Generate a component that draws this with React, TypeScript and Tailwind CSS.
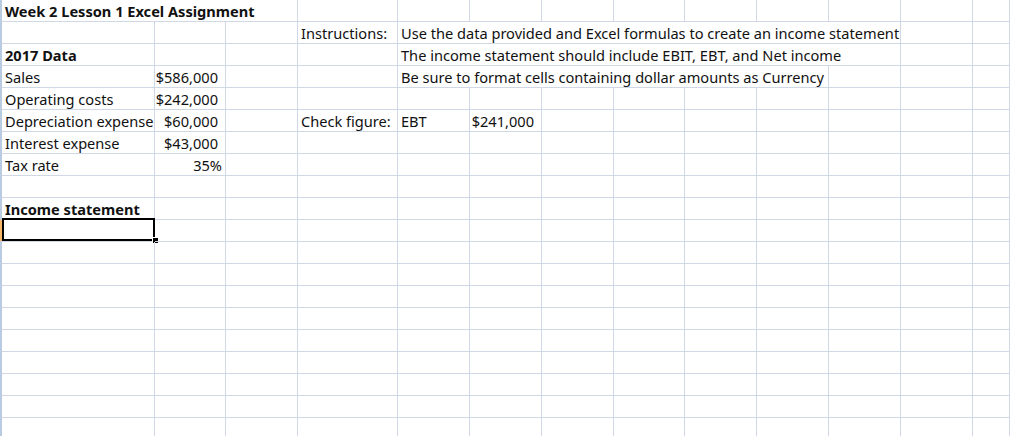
import clsx from 'clsx';

type Cell = {
  col: number; // 0 = A
  span?: number;
  text?: string;
  bold?: boolean;
  align?: 'left' | 'right';
  pad?: 'currency' | 'plain';
};

const COLS = 13; // A..M
const ROW_COUNT = 20;

const rows: Record<number, Cell[]> = {
  1: [{ col: 0, span: 3, text: 'Week 2 Lesson 1 Excel Assignment', bold: true }],
  2: [
    { col: 3, text: 'Instructions:' },
    { col: 4, span: 7, text: 'Use the data provided and Excel formulas to create an income statement' },
  ],
  3: [
    { col: 0, text: '2017 Data', bold: true },
    { col: 4, span: 7, text: 'The income statement should include EBIT, EBT, and Net income' },
  ],
  4: [
    { col: 0, text: 'Sales' },
    { col: 1, text: '$586,000', align: 'right', pad: 'currency' },
    { col: 4, span: 6, text: 'Be sure to format cells containing dollar amounts as Currency' },
  ],
  5: [
    { col: 0, text: 'Operating costs' },
    { col: 1, text: '$242,000', align: 'right', pad: 'currency' },
  ],
  6: [
    { col: 0, text: 'Depreciation expense' },
    { col: 1, text: '$60,000', align: 'right', pad: 'currency' },
    { col: 3, text: 'Check figure:' },
    { col: 4, text: 'EBT' },
    { col: 5, text: '$241,000', align: 'right', pad: 'currency' },
  ],
  7: [
    { col: 0, text: 'Interest expense' },
    { col: 1, text: '$43,000', align: 'right', pad: 'currency' },
  ],
  8: [
    { col: 0, text: 'Tax rate' },
    { col: 1, text: '35%', align: 'right', pad: 'plain' },
  ],
  10: [{ col: 0, text: 'Income statement', bold: true }],
};

const SELECTED_ROW = 11;

function buildRow(r: number): Cell[] {
  const filled = rows[r] ?? [];
  const out: Cell[] = [];
  let c = 0;
  while (c < COLS) {
    const hit = filled.find((f) => f.col === c);
    if (hit) {
      out.push(hit);
      c += hit.span ?? 1;
    } else {
      out.push({ col: c });
      c += 1;
    }
  }
  return out;
}

function SheetCell({ cell, row }: { cell: Cell; row: number }) {
  const span = cell.span ?? 1;
  const selected = row === SELECTED_ROW && cell.col === 0;

  return (
    <div
      className={clsx(
        'relative flex h-[22px] items-end overflow-visible whitespace-nowrap border-b border-r border-[#d0d7e5] pb-[1px] leading-[18px]',
        cell.align === 'right' ? 'justify-end' : 'justify-start pl-[3px]',
        cell.pad === 'currency' && 'pr-[7px]',
        cell.pad === 'plain' && 'pr-[3px]',
        cell.bold && 'font-bold',
        span === 3 && 'col-span-3',
        span === 6 && 'col-span-6',
        span === 7 && 'col-span-7',
      )}
    >
      {cell.text}
      {selected ? (
        <>
          <span className="pointer-events-none absolute left-0 top-[-2px] h-[23px] w-[153px] border-2 border-black" />
          <span className="absolute left-[150px] top-[17px] h-[7px] w-[7px] border border-white bg-black" />
        </>
      ) : null}
    </div>
  );
}

export default function App() {
  const rowNums = Array.from({ length: ROW_COUNT }, (_, i) => i + 1);

  return (
    <div className="h-[436px] w-[1010px] overflow-hidden bg-white font-['Noto_Sans',sans-serif] text-[14.6px] text-[#111]">
      <div className="grid grid-cols-[2px_153px_71px_72px_100px_72px_72px_72px_71px_72px_72px_72px_72px_1fr]">
        {rowNums.map((r) => (
          <div key={r} className="contents">
            <div
              className={clsx(
                'h-[22px] border-b border-[#c3cfde]',
                r === SELECTED_ROW ? 'bg-[#f5b768]' : 'bg-[#b9cbe0]',
              )}
            />
            {buildRow(r).map((cell) => (
              <SheetCell key={cell.col} cell={cell} row={r} />
            ))}
          </div>
        ))}
      </div>
    </div>
  );
}
